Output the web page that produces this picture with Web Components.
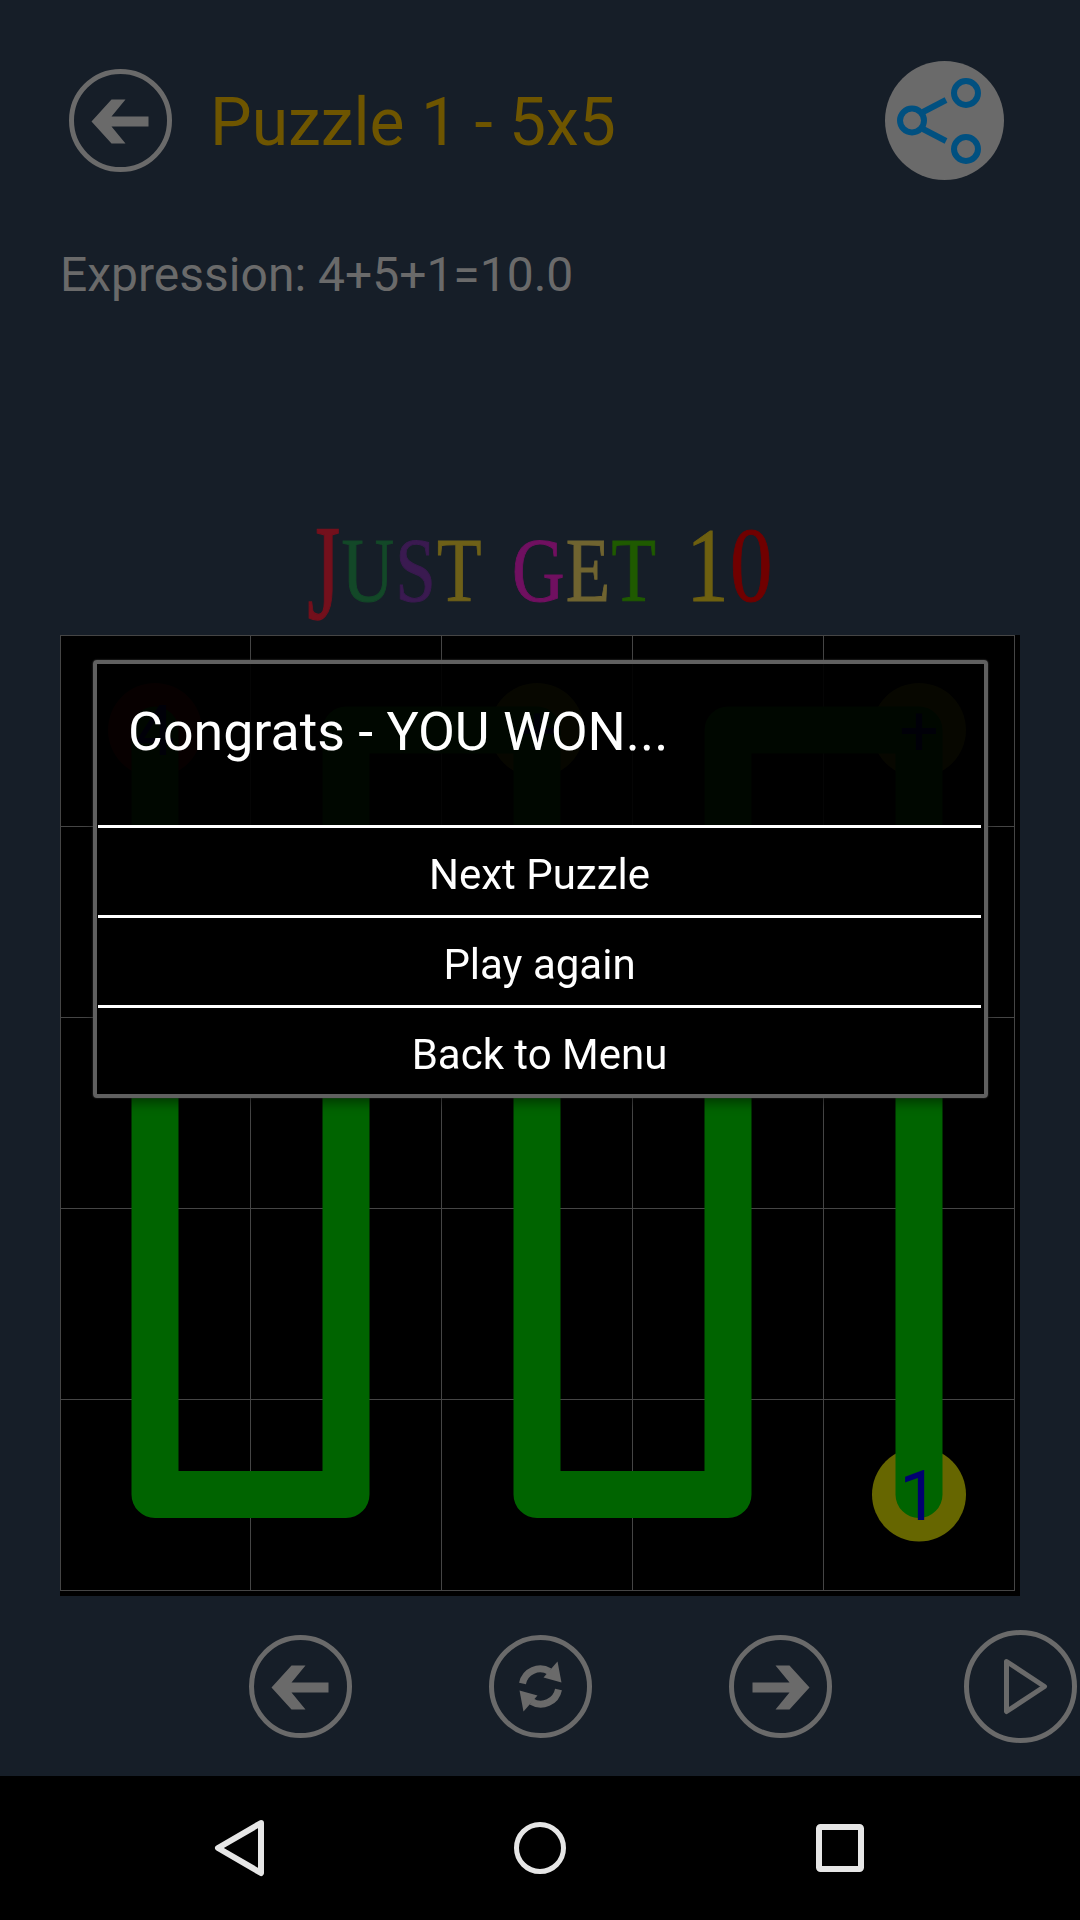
<!DOCTYPE html>
<html>
<head>
<meta charset="utf-8">
<title>Just Get 10</title>
<style>
  html, body { margin: 0; padding: 0; }
  body { width: 1080px; height: 1920px; overflow: hidden; background: #161e28; font-family: Roboto, "Liberation Sans", sans-serif; }
  #screen { position: relative; width: 1080px; height: 1776px; overflow: hidden; }
</style>
</head>
<body>
<div id="screen">
  <game-header title-text="Puzzle 1 - 5x5"></game-header>
  <game-expression>Expression: 4+5+1=10.0</game-expression>
  <game-logo></game-logo>
  <game-board></game-board>
  <game-controls></game-controls>
  <win-dialog heading="Congrats - YOU WON...">
    <dialog-item>Next Puzzle</dialog-item>
    <dialog-item>Play again</dialog-item>
    <dialog-item>Back to Menu</dialog-item>
  </win-dialog>
</div>
<nav-bar></nav-bar>

<script>
const GREY = '#6a6a6a';

const RELOAD_HALF = `<path d="M-18 -3 A18 18 0 0 1 9 -15" fill="none" stroke="${GREY}" stroke-width="7"/>
                     <polygon points="17,-25 21,-4 3,-9"/>`;

// glyphs drawn around the centre of a round button
const GLYPHS = {
    back: `<polygon points="-29,1 -9,-21 5,-21 -9,-4 28,-4 28,6 -9,6 5,23 -9,23" fill="${GREY}"/>`,
    next: `<polygon points="29,1 9,-21 -5,-21 9,-4 -28,-4 -28,6 9,6 -5,23 9,23" fill="${GREY}"/>`,
    reload: `<g fill="${GREY}">${RELOAD_HALF}</g><g fill="${GREY}" transform="rotate(180)">${RELOAD_HALF}</g>`,
    play: `<polygon points="-14,-25 24,0 -14,25" fill="none" stroke="${GREY}" stroke-width="5" stroke-linejoin="round"/>`
};

class RoundButton extends HTMLElement {
    connectedCallback() {
        const size = parseInt(this.getAttribute('size') || '103', 10);
        const icon = this.getAttribute('icon');
        const r = size / 2;
        this.attachShadow({ mode: 'open' }).innerHTML = `
            <style>
                :host { display: block; width: ${size}px; height: ${size}px; }
                svg { display: block; }
            </style>
            <svg width="${size}" height="${size}" viewBox="${-r} ${-r} ${size} ${size}">
                <circle r="${r - 2.5}" fill="none" stroke="${GREY}" stroke-width="5"/>
                ${GLYPHS[icon]}
            </svg>`;
    }
}
customElements.define('round-button', RoundButton);

class GameHeader extends HTMLElement {
    connectedCallback() {
        this.attachShadow({ mode: 'open' }).innerHTML = `
            <style>
                :host { display: flex; align-items: center; height: 120px; padding: 60px 76px 0 69px; }
                h1 { margin: 0 0 0 38px; padding-top: 4px; font: 400 66px Roboto, sans-serif; color: #6e5500; }
                .share { margin-left: auto; display: block; }
            </style>
            <round-button icon="back"></round-button>
            <h1>${this.getAttribute('title-text')}</h1>
            <svg class="share" width="119" height="119" viewBox="0 0 119 119">
                <circle cx="59.5" cy="59.5" r="59.5" fill="${GREY}"/>
                <g fill="none" stroke="#005080" stroke-width="6">
                    <line x1="38" y1="51" x2="61" y2="39"/>
                    <line x1="38" y1="68" x2="61" y2="80"/>
                    <circle cx="81" cy="32" r="12"/>
                    <circle cx="27" cy="59.5" r="12"/>
                    <circle cx="81" cy="88" r="12"/>
                </g>
            </svg>`;
    }
}
customElements.define('game-header', GameHeader);

class GameExpression extends HTMLElement {
    connectedCallback() {
        this.attachShadow({ mode: 'open' }).innerHTML = `
            <style>
                :host { display: block; margin: 67px 0 0 60px; font: 400 48px/56px Roboto, sans-serif; color: ${GREY}; }
            </style>
            <slot></slot>`;
    }
}
customElements.define('game-expression', GameExpression);

class GameLogo extends HTMLElement {
    connectedCallback() {
        const letters = [
            ['J', '#73101c', 'big j'], ['U', '#134828', ''], ['S', '#3a1a50', ''], ['T', '#6e6018', ''], [' '],
            ['G', '#701060', ''], ['E', '#706430', ''], ['T', '#1f5a00', ''], [' '],
            ['1', '#6e6010', 'big'], ['0', '#700000', 'big']
        ];
        const spans = letters.map(([ch, color, cls]) =>
            ch === ' ' ? ' ' : `<span class="${cls}" style="color:${color}">${ch}</span>`).join('');
        this.attachShadow({ mode: 'open' }).innerHTML = `
            <style>
                :host { display: block; height: 119px; margin-top: 213px; text-align: center; }
                div { display: inline-block; transform: scaleX(0.8); white-space: pre; letter-spacing: 1.5px;
                      word-spacing: 14px; -webkit-text-stroke: 1px currentColor;
                      font: 400 91px/100px "Liberation Serif", serif; }
                .big { font-size: 106px; }
                .j { display: inline-block; transform: scaleY(1.28); transform-origin: 50% 20%; }
            </style>
            <div>${spans}</div>`;
    }
}
customElements.define('game-logo', GameLogo);

class GameBoard extends HTMLElement {
    connectedCallback() {
        const step = 191;
        let lines = '';
        for (let i = 0; i <= 5; i++) {
            const x = i === 0 ? 0.5 : i * step - 0.5;
            const y = i * step + 0.5;
            lines += `<line x1="${x}" y1="0" x2="${x}" y2="955"/><line x1="0" y1="${y}" x2="955" y2="${y}"/>`;
        }
        const cells = [[95, 95, '#660000', '4'], [477, 95, '#666600', '+'], [859, 95, '#666600', '+'], [859, 859.5, '#666600', '1']];
        this.attachShadow({ mode: 'open' }).innerHTML = `
            <style>
                :host { display: block; width: 960px; height: 961px; margin: 0 0 0 60px; background: #000; }
                svg { display: block; }
                text { font: 400 70px Roboto, sans-serif; fill: #000070; text-anchor: middle; }
            </style>
            <svg width="960" height="961" viewBox="0 0 960 961">
                <g stroke="#454545" stroke-width="1">${lines}</g>
                ${cells.map(c => `<circle cx="${c[0]}" cy="${c[1]}" r="47" fill="${c[2]}"/>`).join('')}
                <path d="M95 95 V859.5 H286 V95 H477 V859.5 H668 V95 H859 V859.5" fill="none" stroke="#006400"
                      stroke-width="47" stroke-linecap="round" stroke-linejoin="round"/>
                ${cells.map(c => `<text x="${c[0]}" y="${c[1] + 25}">${c[3]}</text>`).join('')}
            </svg>`;
    }
}
customElements.define('game-board', GameBoard);

class GameControls extends HTMLElement {
    connectedCallback() {
        this.attachShadow({ mode: 'open' }).innerHTML = `
            <style>
                :host { display: grid; grid-template-columns: repeat(4, 240px); justify-items: center;
                        align-items: center; height: 114px; margin-top: 33px; padding-left: 180px; }
            </style>
            <round-button icon="back"></round-button>
            <round-button icon="reload"></round-button>
            <round-button icon="next"></round-button>
            <round-button icon="play" size="113"></round-button>`;
    }
}
customElements.define('game-controls', GameControls);

class DialogItem extends HTMLElement {
    connectedCallback() {
        this.attachShadow({ mode: 'open' }).innerHTML = `
            <style>
                :host { display: block; padding: 0 3px 0 1px; background: #000;
                        font: 400 42px/94px Roboto, sans-serif; color: #fff; text-align: center; }
                hr { height: 3px; margin: 0; border: 0; background: #fff; }
                p { margin: 0; height: 87px; }
                :host(:last-child) p { height: 86px; }
            </style>
            <hr><p><slot></slot></p>`;
    }
}
customElements.define('dialog-item', DialogItem);

class WinDialog extends HTMLElement {
    connectedCallback() {
        this.attachShadow({ mode: 'open' }).innerHTML = `
            <style>
                :host { position: absolute; left: 93px; top: 660px; width: 887px; display: block;
                        border: 4px solid #606060; border-radius: 4px;
                        box-shadow: 0 5px 12px rgba(0, 0, 0, 0.45), 0 0 2px #555; }
                h2 { margin: 0; height: 161px; box-sizing: border-box; padding: 36px 0 0 31px;
                     background: rgba(0, 0, 0, 0.93);
                     font: 400 53.7px/64px Roboto, sans-serif; color: #fff; }
            </style>
            <h2>${this.getAttribute('heading')}</h2>
            <slot></slot>`;
    }
}
customElements.define('win-dialog', WinDialog);

class NavBar extends HTMLElement {
    connectedCallback() {
        this.attachShadow({ mode: 'open' }).innerHTML = `
            <style>
                :host { display: block; height: 144px; background: #000; }
                svg { display: block; }
            </style>
            <svg width="1080" height="144" viewBox="0 0 1080 144" fill="none" stroke="#e6e6e6" stroke-width="5">
                <polygon points="261,47 218,72 261,97" stroke-linejoin="round" stroke-width="6"/>
                <circle cx="540" cy="72" r="23.5"/>
                <rect x="819" y="51" width="42" height="42" rx="1.5" stroke-width="6"/>
            </svg>`;
    }
}
customElements.define('nav-bar', NavBar);
</script>
</body>
</html>
